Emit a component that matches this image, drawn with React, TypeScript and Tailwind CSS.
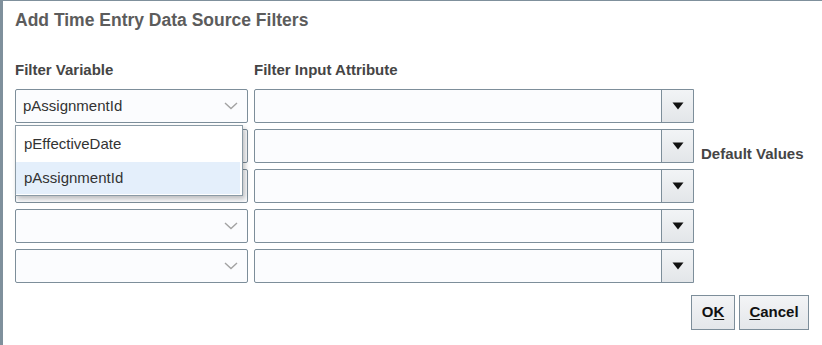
import React from 'react';

const rows = [0, 1, 2, 3, 4];

const Chevron: React.FC = () => (
  <svg width="14" height="8" viewBox="0 0 14 8" className="shrink-0">
    <path d="M1 1 L7 6.5 L13 1" fill="none" stroke="#a3a3a3" strokeWidth="1.4" />
  </svg>
);

const Caret: React.FC = () => (
  <svg width="12" height="8" viewBox="0 0 12 8">
    <path d="M0.5 0.5 H11.5 L6 7.5 Z" fill="#111" />
  </svg>
);

const App: React.FC = () => {
  return (
    <div
      className="w-[822px] h-[345px] bg-white border-l-[3px] border-t border-[#7f909c] overflow-hidden relative"
      style={{ fontFamily: '"Liberation Sans", Arial, sans-serif' }}
    >
      <div className="pl-[12px] pr-[13px]">
        <h1 className="pt-[9px] text-[17.5px] font-bold text-[#5c5c5c] leading-[20px]">
          Add Time Entry Data Source Filters
        </h1>

        <div className="mt-[31px] flex gap-[6px] text-[15px] font-bold text-[#454545] leading-[17px]">
          <div className="w-[233px]">Filter Variable</div>
          <div>Filter Input Attribute</div>
        </div>

        <div className="mt-[11px] flex items-start">
          <div className="flex flex-col gap-[6px]">
            {rows.map((r) => (
              <div key={r} className="flex gap-[6px]">
                <div className="w-[233px] h-[34px] border border-[#7d8e9a] rounded-[2px] bg-[#fbfcfe] flex items-center justify-between pl-[7px] pr-[9px]">
                  <span className="text-[15px] text-[#333]">{r === 0 ? 'pAssignmentId' : ''}</span>
                  <Chevron />
                </div>
                <div className="w-[440px] h-[34px] border border-[#7d8e9a] rounded-l-[2px] bg-[#fbfcfe] flex">
                  <div className="flex-1" />
                  <div className="w-[32px] border-l border-[#7d8e9a] bg-gradient-to-b from-[#f2f4f6] to-[#e3e6e9] flex items-center justify-center">
                    <Caret />
                  </div>
                </div>
              </div>
            ))}
          </div>
          <div className="ml-[7px] mt-[56px] text-[15px] leading-[17px] font-bold text-[#454545]">Default Values</div>
        </div>

        <div className="mt-[12px] flex justify-end gap-[4px]">
          <button className="h-[35px] w-[44px] border border-[#7d8e9a] bg-gradient-to-b from-[#f3f4f6] to-[#e4e7ea] text-[15px] font-bold text-[#111]">
            O<span className="underline underline-offset-2">K</span>
          </button>
          <button className="h-[35px] w-[70px] border border-[#7d8e9a] bg-gradient-to-b from-[#f3f4f6] to-[#e4e7ea] text-[15px] font-bold text-[#111]">
            <span className="underline underline-offset-2">C</span>ancel
          </button>
        </div>
      </div>

      <div className="absolute left-[12px] top-[124px] w-[228px] border border-[#8a9aa5] bg-white shadow-[2px_3px_5px_rgba(0,0,0,0.25)] text-[15px] text-[#333]">
        <div className="h-[36px] flex items-center pl-[8px]">pEffectiveDate</div>
        <div className="h-[32px] mb-[1px] mr-[2px] flex items-center pl-[8px] bg-[#e4effb]">pAssignmentId</div>
      </div>
    </div>
  );
};

export default App;
